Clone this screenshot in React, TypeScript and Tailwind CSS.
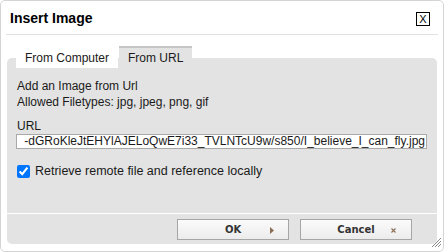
export default function App() {
  return (
    <div className="relative flex h-[252px] w-[444px] flex-col rounded-[5px] border border-[#d4d4d4] bg-white font-['Liberation_Sans',Arial,sans-serif] text-[12px] text-[#1a1a1a]">
      {/* Title bar */}
      <div className="flex h-[33px] shrink-0 items-center justify-between pl-[9px] pr-[13px]">
        <span className="pt-[1px] text-[14px] font-bold text-black">Insert Image</span>
        <button className="mt-[3px] flex h-[14px] w-[14px] items-center justify-center border border-black text-[11px] leading-none text-black">
          X
        </button>
      </div>
      <div className="mx-[5px] border-b border-[#e2e2e2]" />

      <div className="mx-[6px] mt-[11px] flex flex-col">
        {/* Tabs */}
        <div className="relative z-10 mb-[-10px] ml-[9px] flex h-[22px]">
          <div className="flex items-center border-t-2 border-white bg-white px-[9px]">From Computer</div>
          <div className="ml-[1px] flex items-center border-t-2 border-[#c6c6c6] bg-[#e3e3e3] px-[9px]">From URL</div>
        </div>

        {/* Panel */}
        <div className="flex h-[155px] flex-col rounded-t-[5px] bg-[#e3e3e3] pl-[9px] pr-[10px] pt-[20px]">
          <div className="pl-[1px] leading-[16px]">
            <div>Add an Image from Url</div>
            <div>Allowed Filetypes: jpg, jpeg, png, gif</div>
          </div>
          <div className="mt-[8px] pl-[1px] leading-[16px]">URL</div>
          <div className="flex h-[15px] items-center justify-end overflow-hidden whitespace-nowrap border border-[#a9a9a9] bg-white pr-[1px]">
            <span className="leading-[13px]">-dGRoKleJtEHYlAJELoQwE7i33_TVLNTcU9w/s850/I_believe_I_can_fly.jpg</span>
          </div>
          <label className="mt-[13px] flex items-center gap-[5px] pl-[1px]">
            <input type="checkbox" checked readOnly className="m-0 h-[13px] w-[13px] accent-[#0075ff]" />
            <span className="text-[12.5px]">Retrieve remote file and reference locally</span>
          </label>
        </div>

        {/* Footer */}
        <div className="mt-[1px] flex h-[30px] items-start justify-end gap-[11px] rounded-b-[5px] bg-[#e3e3e3] pr-[25px] pt-[5px]">
          <button className="relative flex h-[21px] w-[112px] items-center justify-center border border-[#a6a6a6] bg-gradient-to-b from-[#fbfbfb] to-[#ececec] font-['DejaVu_Sans',Verdana,sans-serif] text-[10px] font-bold text-[#333]">
            OK
            <svg className="absolute right-[14px] top-[7px]" width="4" height="7" viewBox="0 0 4 7">
              <path d="M0 0 L4 3.5 L0 7 Z" fill="#8c6e55" />
            </svg>
          </button>
          <button className="relative flex h-[21px] w-[112px] items-center justify-center border border-[#a6a6a6] bg-gradient-to-b from-[#fbfbfb] to-[#ececec] font-['DejaVu_Sans',Verdana,sans-serif] text-[10px] font-bold text-[#333]">
            Cancel
            <svg className="absolute right-[15px] top-[8px]" width="5" height="5" viewBox="0 0 5 5">
              <path d="M0.5 0.5 L4.5 4.5 M4.5 0.5 L0.5 4.5" stroke="#8c6e55" strokeWidth="1.1" />
            </svg>
          </button>
        </div>
      </div>

      {/* Resize grip */}
      <svg className="absolute bottom-[4px] right-[2px]" width="10" height="10" viewBox="0 0 10 10">
        <path d="M10 1 L1 10 M10 4 L4 10 M10 7 L7 10" stroke="#8a8a8a" strokeWidth="1" />
      </svg>
    </div>
  );
}
